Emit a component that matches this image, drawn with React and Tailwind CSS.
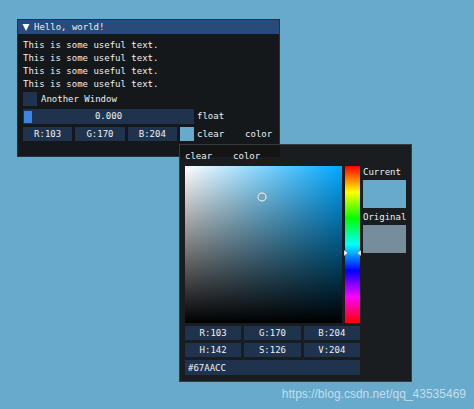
import React, { useState } from "react";

const lines = [1, 2, 3, 4];

function Field({ label, value }) {
  return (
    <input
      type="text"
      aria-label={label}
      defaultValue={value}
      className="block h-[14px] w-full min-w-0 bg-[#20334e] text-center outline-none"
    />
  );
}

function HelloWindow() {
  const [open, setOpen] = useState(true);
  const [value, setValue] = useState(0);

  return (
    <section className="w-[263px] border border-[#26323b] bg-[#0f0f0f]/94">
      <header className="flex h-[14px] items-center gap-1 bg-[#294a7a] px-1">
        <button
          type="button"
          aria-label="Collapse"
          onClick={() => setOpen(!open)}
        >
          <svg viewBox="0 0 8 7" className="h-[7px] w-2">
            <path d="M.5 0h7L4 7z" fill="#fff" />
          </svg>
        </button>
        <h1>Hello, world!</h1>
      </header>
      {open && (
        <div className="px-[5px] pt-[5px] pb-[15px]">
          {lines.map((n) => (
            <p key={n}>This is some useful text.</p>
          ))}
          <label className="mt-px flex items-center gap-1">
            <input
              type="checkbox"
              className="h-[14px] w-[14px] appearance-none bg-[#20334e] checked:bg-[#4296fa]"
            />
            Another Window
          </label>
          <div className="mt-[3px] flex items-center gap-[3px]">
            <div className="relative h-[15px] w-[171px]">
              <input
                id="float"
                type="range"
                min="0"
                max="1"
                step="0.001"
                value={value}
                onChange={(e) => setValue(Number(e.target.value))}
                className="block h-full w-full appearance-none bg-[#20334e] px-px [&::-webkit-slider-thumb]:h-3 [&::-webkit-slider-thumb]:w-2 [&::-webkit-slider-thumb]:appearance-none [&::-webkit-slider-thumb]:bg-[#3d85e0]"
              />
              <span className="pointer-events-none absolute inset-0 flex items-center justify-center">
                {value.toFixed(3)}
              </span>
            </div>
            <label htmlFor="float">float</label>
          </div>
          <div className="mt-[3px] flex items-center gap-[3px]">
            <div className="grid w-[154px] grid-cols-3 gap-[3px]">
              <Field label="Red" value="R:103" />
              <Field label="Green" value="G:170" />
              <Field label="Blue" value="B:204" />
            </div>
            <button
              type="button"
              aria-label="Pick clear color"
              className="h-[14px] w-[14px] bg-[#67aacc]"
            />
            <span className="flex gap-[21px]">
              <span>clear</span>
              <span>color</span>
            </span>
          </div>
        </div>
      )}
    </section>
  );
}

function PickerWindow() {
  return (
    <section className="absolute top-[144px] left-[179px] w-[233px] border border-[#343c42] bg-[#141414]/94 px-[5px] pt-[5px] pb-[6px]">
      <h2 className="flex gap-[21px]">
        <span>clear</span>
        <span>color</span>
      </h2>
      <div className="mt-[3px] flex gap-[3px]">
        <div className="relative h-[157px] w-[157px] bg-[linear-gradient(to_top,#000,transparent),linear-gradient(to_right,#fff,#00a8ff)]">
          <svg
            viewBox="0 0 10 10"
            className="absolute top-[26px] left-[72px] h-[10px] w-[10px]"
          >
            <circle cx="5" cy="5" r="4" fill="#67aacc" stroke="#808080" strokeWidth="2" />
            <circle cx="5" cy="5" r="4" fill="none" stroke="#d5e5f0" strokeWidth="1.5" />
          </svg>
        </div>
        <div className="relative h-[157px] w-[15px] bg-[linear-gradient(to_bottom,#f00,#ff0,#0f0,#0ff,#00f,#f0f,#f00)]">
          <input
            type="range"
            aria-label="Hue"
            min="0"
            max="255"
            defaultValue="142"
            className="block h-full w-full opacity-0 [writing-mode:vertical-lr]"
          />
          <svg
            viewBox="0 0 17 6"
            className="pointer-events-none absolute top-[84px] -left-px h-[6px] w-[17px]"
          >
            <path d="M0 0l4 3-4 3zM17 0l-4 3 4 3z" fill="#fff" stroke="#222" strokeWidth=".3" />
          </svg>
        </div>
        <div className="w-[43px]">
          <p>Current</p>
          <div className="mt-px h-7 bg-[#67aacc]" />
          <p className="mt-[3px]">Original</p>
          <div className="mt-px h-7 bg-[#748e9d]" />
        </div>
      </div>
      <div className="mt-[3px] grid w-[175px] grid-cols-3 gap-x-[3px] gap-y-[3px]">
        <Field label="Red" value="R:103" />
        <Field label="Green" value="G:170" />
        <Field label="Blue" value="B:204" />
        <Field label="Hue" value="H:142" />
        <Field label="Saturation" value="S:126" />
        <Field label="Value" value="V:204" />
        <input
          type="text"
          aria-label="Hex"
          defaultValue="#67AACC"
          className="col-span-3 block h-[15px] w-full min-w-0 bg-[#20334e] px-[3px] outline-none"
        />
      </div>
    </section>
  );
}

export default function App() {
  return (
    <main className="relative flex min-h-screen flex-col items-start justify-between bg-[#67aacc] font-['DejaVu_Sans_Mono','Liberation_Mono',monospace] text-[9px] leading-[13px] text-[#eef1f3]">
      <div className="pt-[19px] pl-[17px]">
        <HelloWindow />
      </div>
      <PickerWindow />
      <p className="self-end pr-2 pb-[7px] font-['Liberation_Sans',Arial,sans-serif] text-xs text-[#c3dfec]">
        https://blog.csdn.net/qq_43535469
      </p>
    </main>
  );
}
